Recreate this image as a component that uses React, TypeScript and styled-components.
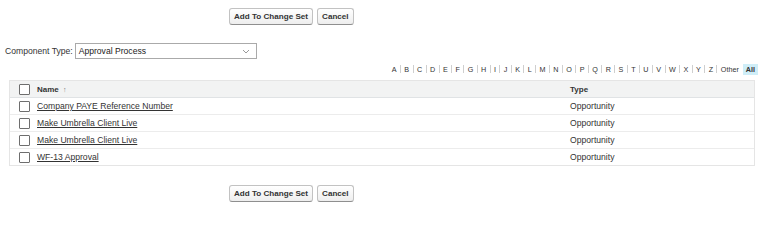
import React, { FC } from "react";
import styled, { createGlobalStyle } from "styled-components";

const GlobalStyle = createGlobalStyle`
  body {
    margin: 0;
    background: #fff;
    font-family: "Liberation Sans", Arial, sans-serif;
    font-size: 9px;
    color: #333;
  }
`;

const letters = "ABCDEFGHIJKLMNOPQRSTUVWXYZ".split("");

const rows = [
  { name: "Company PAYE Reference Number", type: "Opportunity" },
  { name: "Make Umbrella Client Live", type: "Opportunity" },
  { name: "Make Umbrella Client Live", type: "Opportunity" },
  { name: "WF-13 Approval", type: "Opportunity" },
];

const ButtonBar: FC<{ top: number }> = ({ top }) => (
  <ButtonRow $top={top}>
    <Btn>Add To Change Set</Btn>
    <Btn>Cancel</Btn>
  </ButtonRow>
);

const App: FC = () => {
  return (
    <Page>
      <GlobalStyle />
      <ButtonBar top={8} />
      <FilterRow>
        <Label>Component Type:</Label>
        <SelectBox>
          <span>Approval Process</span>
          <svg width="8" height="5" viewBox="0 0 8 5">
            <path d="M1 1l3 3 3-3" fill="none" stroke="#999" strokeWidth="1" />
          </svg>
        </SelectBox>
      </FilterRow>
      <AlphaRow>
        {letters.map((l) => (
          <React.Fragment key={l}>
            <Letter>{l}</Letter>
            <Sep />
          </React.Fragment>
        ))}
        <Letter>Other</Letter>
        <Letter $active>All</Letter>
      </AlphaRow>
      <Table>
        <HeaderRow>
          <CheckCell>
            <Check />
          </CheckCell>
          <NameCell $head>
            Name <Arrow>↑</Arrow>
          </NameCell>
          <TypeCell $head>Type</TypeCell>
        </HeaderRow>
        {rows.map((r, i) => (
          <Row key={i} $last={i === rows.length - 1}>
            <CheckCell>
              <Check />
            </CheckCell>
            <NameCell>
              <NameLink href="#">{r.name}</NameLink>
            </NameCell>
            <TypeCell>{r.type}</TypeCell>
          </Row>
        ))}
      </Table>
      <ButtonBar top={19} />
    </Page>
  );
};

export default App;

const Page = styled.div`
  width: 768px;
  height: 250px;
  overflow: hidden;
`;

const ButtonRow = styled.div<{ $top: number }>`
  display: flex;
  gap: 4px;
  padding: ${(p) => p.$top}px 0 0 229px;
`;

const Btn = styled.button`
  font-family: "Liberation Sans", Arial, sans-serif;
  font-size: 8.1px;
  font-weight: bold;
  color: #333;
  height: 17px;
  padding: 0 4px;
  border: 1px solid #c2c2c2;
  border-bottom-color: #8f8f8f;
  border-radius: 3px;
  background: linear-gradient(#fff, #eeeeee);
  cursor: pointer;
`;

const FilterRow = styled.div`
  display: flex;
  align-items: center;
  padding: 18px 0 0 5px;
`;

const Label = styled.span`
  font-size: 8.6px;
  color: #333;
  margin-right: 2px;
`;

const SelectBox = styled.div`
  width: 182px;
  height: 16px;
  box-sizing: border-box;
  border: 1px solid #aaa;
  display: flex;
  align-items: center;
  justify-content: space-between;
  padding: 0 6px 0 3px;
  font-size: 8.6px;
  color: #222;
  background: #fff;
`;

const AlphaRow = styled.div`
  display: flex;
  justify-content: flex-end;
  align-items: center;
  height: 10px;
  padding: 5px 10px 0 0;
  font-size: 7.2px;
  -webkit-font-smoothing: antialiased;
`;

const Letter = styled.span<{ $active?: boolean }>`
  color: #333;
  padding: ${(p) => (p.$active ? "1px 3px" : "0 2px")};
  margin-left: ${(p) => (p.$active ? "2px" : "0")};
  background: ${(p) => (p.$active ? "#cfeef8" : "transparent")};
  font-weight: ${(p) => (p.$active ? "bold" : "normal")};
`;

const Sep = styled.span`
  width: 1px;
  height: 8px;
  background: #cfcfcf;
  margin: 0 1.4px;
`;

const Table = styled.div`
  margin: 6px 13px 0 9px;
  border: 1px solid #e5e5e5;
`;

const HeaderRow = styled.div`
  display: flex;
  align-items: center;
  height: 16px;
  background: #f2f3f3;
  border-bottom: 1px solid #e0e3e5;
`;

const Row = styled.div<{ $last?: boolean }>`
  display: flex;
  align-items: center;
  height: 16px;
  border-bottom: ${(p) => (p.$last ? "none" : "1px solid #ececec")};
`;

const CheckCell = styled.div`
  width: 26px;
  display: flex;
  justify-content: center;
  padding-left: 2px;
  box-sizing: border-box;
`;

const Check = styled.span`
  width: 9px;
  height: 9px;
  border: 1px solid #6e6e6e;
  border-radius: 1px;
  background: #fff;
`;

const NameCell = styled.div<{ $head?: boolean }>`
  width: 533px;
  padding-left: 1px;
  font-size: ${(p) => (p.$head ? "8px" : "8.6px")};
  font-weight: ${(p) => (p.$head ? "bold" : "normal")};
  color: #333;
`;

const TypeCell = styled.div<{ $head?: boolean }>`
  flex: 1;
  font-size: ${(p) => (p.$head ? "8px" : "8.6px")};
  font-weight: ${(p) => (p.$head ? "bold" : "normal")};
  color: #333;
`;

const Arrow = styled.span`
  font-size: 7px;
  color: #777;
  margin-left: 2px;
`;

const NameLink = styled.a`
  color: #333;
  text-decoration: underline;
`;
